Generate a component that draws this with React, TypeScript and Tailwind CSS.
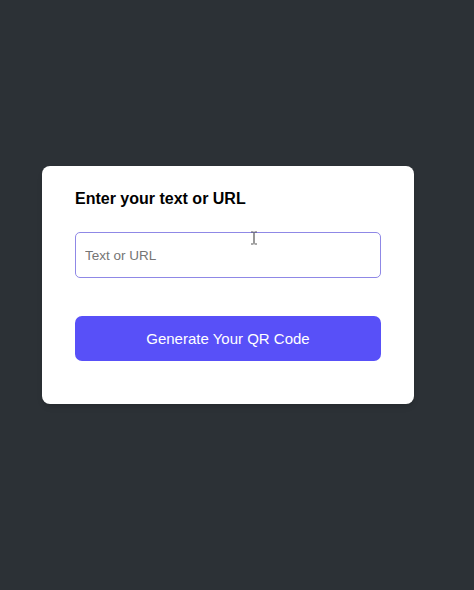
export default function App() {
  return (
    <div className="min-h-[590px] w-full bg-[#2c3136] pl-[42px] pt-[166px] font-['Liberation_Sans',Arial,sans-serif]">
      <div className="relative w-[372px] rounded-[8px] bg-white px-[33px] pb-[43px] pt-[23px] shadow-md">
        <h2 className="text-[16px] font-bold leading-[20px] text-black">Enter your text or URL</h2>
        <input
          type="text"
          placeholder="Text or URL"
          className="mt-[23px] block h-[46px] w-[306px] rounded-[5px] border border-[#8f88e6] px-[9px] text-[13.5px] text-black outline-none placeholder:text-[#757575]"
        />
        <button className="mt-[38px] block h-[45px] w-[306px] rounded-[7px] bg-[#5850f8] pt-[2px] text-[15px] text-white">
          Generate Your QR Code
        </button>
        {/* mouse cursor over the input */}
        <svg className="absolute left-[208px] top-[65px]" width="8" height="14" viewBox="0 0 8 14">
          <path d="M1 1h2.5M4.5 1H7M4 1.5v11M1 13h2.5M4.5 13H7" stroke="#555" strokeWidth="1.2" fill="none" />
        </svg>
      </div>
    </div>
  );
}
